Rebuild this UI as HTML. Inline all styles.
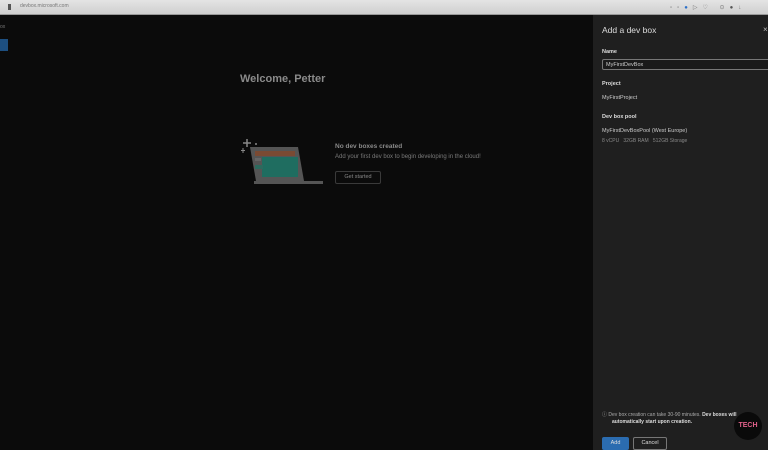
<!DOCTYPE html>
<html><head><style>
*{margin:0;padding:0;box-sizing:border-box}
body{width:768px;height:450px;background:#0b0b0b;font-family:"Liberation Sans",sans-serif;overflow:hidden;position:relative}
.bar{position:absolute;left:0;top:0;width:768px;height:15px;background:linear-gradient(#e4e4e4,#cfcfcf);border-bottom:1px solid #999}
.t{position:absolute;white-space:nowrap}
.panel{position:absolute;left:593px;top:15px;width:175px;height:435px;background:#1f1f1f}
</style></head><body>
<div class="bar">
<div class="t" style="left:8px;top:4px;width:3px;height:6px;background:#555"></div>
<div class="t" style="left:20px;top:3px;font-size:5px;color:#777">devbox.microsoft.com</div>
<div class="t" style="left:670px;top:4px;font-size:6px;color:#777;letter-spacing:5px">▫▫<span style="color:#2a6fc9">●</span>▷♡ ⊙<span style="color:#555">●</span>↓</div>
</div>
<div class="t" style="left:0;top:24px;font-size:5px;color:#777">ox</div>
<div class="t" style="left:0;top:39px;width:8px;height:12px;background:#1d4f80"></div>
<div class="t" style="left:240px;top:73px;font-size:11px;color:#8a8a8a;font-weight:bold">Welcome, Petter</div>
<svg class="t" style="left:240px;top:137px" width="85" height="50">
<path d="M7 2v8M3 6h8" stroke="#888" stroke-width="1.5"/><circle cx="16" cy="7" r="1" fill="#888"/><path d="M3 11v5M1 13.5h4" stroke="#888" stroke-width="1"/>
<path d="M10 10h48l6 34H16z" fill="#555"/><rect x="15" y="14" width="40" height="5" fill="#7a4a33"/>
<rect x="22" y="20" width="36" height="20" fill="#1f6d60"/><rect x="15" y="21" width="6" height="3" fill="#666"/><rect x="15" y="28" width="8" height="4" fill="#2d6a5e"/>
<rect x="14" y="44" width="69" height="3" fill="#555"/>
</svg>
<div class="t" style="left:335px;top:143px;font-size:6.5px;color:#8a8a8a;font-weight:bold">No dev boxes created</div>
<div class="t" style="left:335px;top:154px;font-size:6px;color:#7a7a7a">Add your first dev box to begin developing in the cloud!</div>
<div class="t" style="left:335px;top:171px;width:46px;height:13px;border:1px solid #3a3a3a;border-radius:2px;font-size:5.5px;color:#888;text-align:center;line-height:11px">Get started</div>
<div class="panel">
<div class="t" style="left:9px;top:10px;font-size:8.5px;color:#ddd">Add a dev box</div>
<div class="t" style="left:170px;top:10px;font-size:8px;color:#bbb">×</div>
<div class="t" style="left:9px;top:34px;font-size:5.5px;color:#ddd;font-weight:bold">Name</div>
<div class="t" style="left:9px;top:44px;width:170px;height:11px;border:1px solid #777;border-radius:2px;background:#1a1a1a;font-size:5.5px;color:#ccc;padding:2px 3px">MyFirstDevBox</div>
<div class="t" style="left:9px;top:66px;font-size:5.5px;color:#ddd;font-weight:bold">Project</div>
<div class="t" style="left:9px;top:80px;font-size:5.5px;color:#ccc">MyFirstProject</div>
<div class="t" style="left:9px;top:99px;font-size:5.5px;color:#ddd;font-weight:bold">Dev box pool</div>
<div class="t" style="left:9px;top:113px;font-size:5.5px;color:#ccc">MyFirstDevBoxPool (West Europe)</div>
<div class="t" style="left:9px;top:123px;font-size:5px;color:#888">8 vCPU &nbsp; 32GB RAM &nbsp; 512GB Storage</div>
<div class="t" style="left:9px;top:396px;font-size:5px;color:#aaa">ⓘ Dev box creation can take 30-90 minutes. <b style="color:#ddd">Dev boxes will</b></div>
<div class="t" style="left:19px;top:404px;font-size:5px;color:#ddd;font-weight:bold">automatically start upon creation.</div>
<div class="t" style="left:9px;top:422px;width:27px;height:13px;background:#2b6cb0;border-radius:2px;font-size:5.5px;color:#ddd;text-align:center;line-height:13px">Add</div>
<div class="t" style="left:40px;top:422px;width:34px;height:13px;border:1px solid #777;border-radius:2px;font-size:5.5px;color:#ddd;text-align:center;line-height:11px">Cancel</div>
<div class="t" style="left:141px;top:397px;width:28px;height:28px;border-radius:50%;background:#0a0a0a;font-size:7px;color:#e0608a;font-weight:bold;text-align:center;line-height:28px">TECH</div>
</div>
</body></html>
